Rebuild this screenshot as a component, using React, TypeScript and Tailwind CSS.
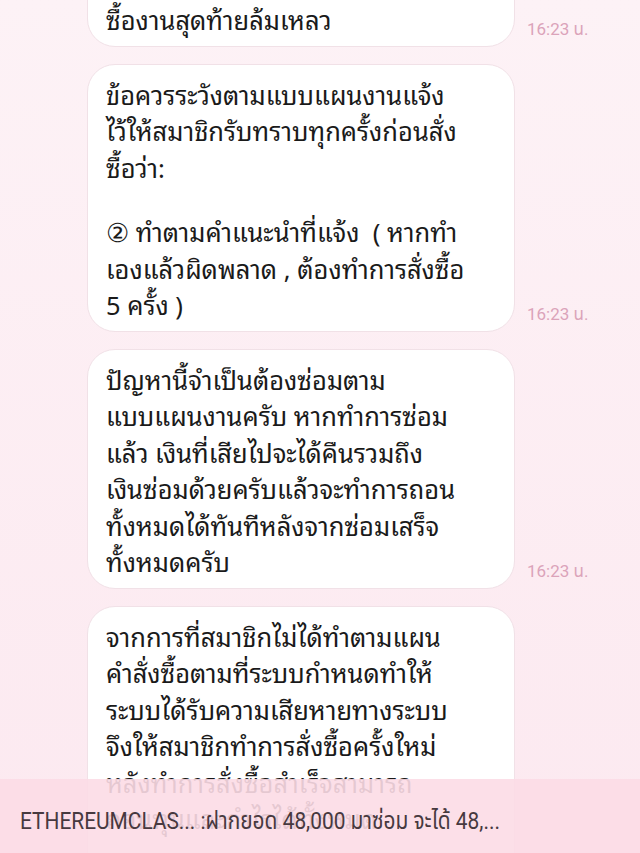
const thai =
  "font-['Noto_Sans_Thai_Looped','Loma','Garuda','Noto_Sans_Thai','Noto_Sans',sans-serif]";

type Msg = { lines: (string | null)[]; pt?: string; pb?: string };

const messages: Msg[] = [
  { lines: ["ซื้องานสุดท้ายล้มเหลว"], pt: "pt-[52px]" },
  {
    lines: [
      "ข้อควรระวังตามแบบแผนงานแจ้ง",
      "ไว้ให้สมาชิกรับทราบทุกครั้งก่อนสั่ง",
      "ซื้อว่า:",
      null,
      "② ทำตามคำแนะนำที่แจ้ง  ( หากทำ",
      "เองแล้วผิดพลาด , ต้องทำการสั่งซื้อ",
      "5 ครั้ง )",
    ],
  },
  {
    lines: [
      "ปัญหานี้จำเป็นต้องซ่อมตาม",
      "แบบแผนงานครับ หากทำการซ่อม",
      "แล้ว เงินที่เสียไปจะได้คืนรวมถึง",
      "เงินซ่อมด้วยครับแล้วจะทำการถอน",
      "ทั้งหมดได้ทันทีหลังจากซ่อมเสร็จ",
      "ทั้งหมดครับ",
    ],
  },
  {
    lines: [
      "จากการที่สมาชิกไม่ได้ทำตามแผน",
      "คำสั่งซื้อตามที่ระบบกำหนดทำให้",
      "ระบบได้รับความเสียหายทางระบบ",
      "จึงให้สมาชิกทำการสั่งซื้อครั้งใหม่",
      "หลังทำการสั่งซื้อสำเร็จสามารถ",
      "ถอนทุนและกำไรได้ทั้งหมด",
    ],
    pb: "pb-[60px]",
  },
];

function Bubble({ msg }: { msg: Msg }) {
  return (
    <div className="flex items-end">
      <div
        className={`w-[428px] ml-[87px] bg-white rounded-[28px] border border-[#f1e1e7] pl-[18px] pr-3 ${msg.pt ?? "pt-[11px]"} ${msg.pb ?? "pb-[8px]"} text-[25.5px] leading-[36.5px] text-[#1a1a1a] ${thai}`}
      >
        {msg.lines.map((l, i) =>
          l === null ? (
            <div key={i} className="h-[28px]" />
          ) : (
            <div key={i} className="whitespace-pre">
              {l}
            </div>
          )
        )}
      </div>
      <span className="ml-3 mb-[4px] text-[17px] text-[#dba3ba] font-['Roboto','Noto_Sans_Thai',sans-serif]">
        16:23 น.
      </span>
    </div>
  );
}

export default function App() {
  return (
    <div className="relative h-[853px] w-[640px] overflow-hidden bg-gradient-to-b from-[#fdf2f6] to-[#fce9f0]">
      <div className="flex flex-col gap-[17px] -mt-[52px]">
        {messages.map((m, i) => (
          <Bubble key={i} msg={m} />
        ))}
      </div>
      <div className="absolute left-0 right-0 bottom-0 h-[74px] bg-[#fcdce6]/90 flex items-center pl-[20px] pt-[10px]">
        <span className="origin-left scale-x-[0.87] text-[24px] text-[#47393f] whitespace-nowrap font-['Roboto','Noto_Sans_Thai',sans-serif]">
          ETHEREUMCLAS... :ฝากยอด 48,000 มาซ่อม จะได้  48,...
        </span>
      </div>
    </div>
  );
}
